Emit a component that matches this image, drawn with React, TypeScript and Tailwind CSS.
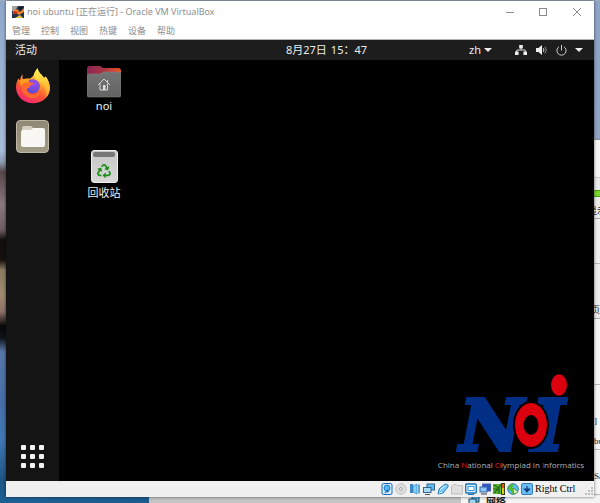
import type { ReactNode } from "react";
import { FaRecycle } from "react-icons/fa";

const uiFont = "font-['Noto_Sans','Noto_Sans_CJK_SC',sans-serif]";
const serifFont = "font-['Liberation_Serif','Noto_Sans_CJK_SC',serif]";

function Icon({ className, box = "0 0 12 12", children }: { className: string; box?: string; children: ReactNode }) {
  return (
    <svg className={"block shrink-0 " + className} viewBox={box} fill="none" aria-hidden="true">
      {children}
    </svg>
  );
}

function Wallpaper() {
  return (
    <div className="absolute inset-0 bg-gradient-to-r from-[#1d6196] to-[#17466f]">
      <div className="h-full w-2 bg-[linear-gradient(to_bottom,#8ea7ca_0px,#a9bdd9_150px,#8e9cb2_162px,#57464a_172px,#8a7a80_205px,#6d5c61_230px,#120e0e_240px,#16110f_260px,#8a7b61_270px,#a08b70_295px,#8d7067_312px,#080808_326px,#10151a_338px,#5877a8_352px,#466fa8_400px,#4178b4_440px,#1c5585_480px,#1c6092_503px)]" />
      <div className="absolute top-0 right-0 h-[140px] w-2 bg-gradient-to-b from-[#8fa6c6] to-[#91a5c3]" />
      <div className="absolute inset-x-0 top-0 h-px bg-[#a0aab9]" />
    </div>
  );
}

function BackWindow() {
  return (
    <div className={"absolute top-[139px] right-0 bottom-0 left-[149px] flex flex-col border-t border-[#8a8f96] bg-[#ececec] text-[9px] leading-3 text-[#222] " + serifFont}>
      <div className="ml-auto flex min-h-0 w-3 flex-1 flex-col overflow-hidden whitespace-nowrap">
        <div className="h-[38px] shrink-0 border-b border-[#ccc] bg-[#f6f6f6]" />
        <div className="h-3 shrink-0" />
        <div className="h-[7px] shrink-0 border-y border-[#4f9e1b] bg-[#7bd52c]" />
        <div className="h-[22px] shrink-0 border-b border-[#aaa] pt-2">显示</div>
        <div className="h-[45px] shrink-0 border-b border-[#bbb] bg-[#efefef]" />
        <div className="h-[55px] shrink-0 border-b border-[#aaa] pt-10 pl-[3px]">页</div>
        <div className="h-[66px] shrink-0 border-b border-[#bbb] bg-[#f6f6f6]" />
        <div className="h-[65px] shrink-0 border-b border-[#bbb] bg-[#f6f6f6] pt-[30px] pl-[6px]">
          <div>]</div>
          <div className="pt-2">bu</div>
        </div>
        <div className="h-[45px] shrink-0 border-b border-[#bbb] bg-[#f6f6f6] pt-5 pl-[6px]">Sa</div>
      </div>
      <div className="flex h-[7px] shrink-0">
        <div className="w-[312px] shrink-0 bg-[#c4c4c4]" />
        <div className="flex flex-1 items-start gap-[6px] overflow-hidden bg-[#f4f4f4] pl-[7px]">
          <Icon className="h-3 w-3">
            <rect x="4" y="0" width="7" height="6" fill="#5ab4ea" stroke="#246" />
            <rect x="1" y="3" width="7" height="6" fill="#9fd3f4" stroke="#246" />
          </Icon>
          <span className="text-[10px] leading-3 font-bold">网络</span>
        </div>
      </div>
    </div>
  );
}

function TitleBar() {
  return (
    <header className="flex h-[22px] shrink-0 items-center bg-white pl-[6px]">
      <Icon className="h-3 w-3">
        <rect width="12" height="12" fill="#26324a" />
        <path d="M0 0h6L3 5H0z" fill="#a6a39d" />
        <path d="M1 5l4-2 3 3 4-4v4L7 9 4 7 1 8z" fill="#f0822a" />
        <path d="M2 5l4 1-2 2-3-1z" fill="#d8261c" />
        <path d="M3 12l5-3 3 3z" fill="#e4bf4c" />
        <path d="M7 1l4 0-3 4z" fill="#101725" />
      </Icon>
      <h1 className={"ml-[3px] flex-1 text-[9px] leading-4 whitespace-nowrap text-[#909090] " + uiFont}>
        noi ubuntu [正在运行] - Oracle VM VirtualBox
      </h1>
      <div className="flex shrink-0 text-[#8a8a8a]">
        <button type="button" aria-label="最小化" className="flex h-5 w-[33px] items-center justify-center">
          <Icon className="h-2 w-2" box="0 0 8 8"><path d="M0 4.500h8" stroke="currentColor" /></Icon>
        </button>
        <button type="button" aria-label="最大化" className="flex h-5 w-[33px] items-center justify-center">
          <Icon className="h-2 w-2" box="0 0 8 8"><rect x=".5" y=".5" width="7" height="7" stroke="currentColor" /></Icon>
        </button>
        <button type="button" aria-label="关闭" className="flex h-5 w-[35px] items-center justify-center">
          <Icon className="h-2 w-2" box="0 0 8 8"><path d="M0 0l8 8M8 0L0 8" stroke="currentColor" /></Icon>
        </button>
      </div>
    </header>
  );
}

function MenuBar() {
  return (
    <nav className={"flex h-[17px] shrink-0 items-center gap-[11px] border-b border-[#b5b5b5] bg-white pl-[6px] text-[9px] leading-4 text-[#8c8c8c] " + uiFont}>
      {["管理", "控制", "视图", "热键", "设备", "帮助"].map((m) => (
        <button key={m} type="button">{m}</button>
      ))}
    </nav>
  );
}

function Caret() {
  return <Icon className="h-1 w-2" box="0 0 8 4"><path d="M0 0h8L4 4z" fill="#eee" /></Icon>;
}

function TopBar() {
  return (
    <div className={"flex h-5 shrink-0 items-center bg-[#1d1d1d] text-[11px] leading-4 text-[#ececec] " + uiFont}>
      <div className="w-[53px] shrink-0 pl-[9px]">
        <button type="button">活动</button>
      </div>
      <div className="grid flex-1 grid-cols-[1fr_auto_1fr] items-center">
        <button type="button" className="col-start-2 flex gap-1">
          <span>8月27日</span>
          <span>15：47</span>
        </button>
        <div className="flex items-center justify-self-end pr-[11px]">
          <button type="button" className="flex items-center gap-[3px]">zh <Caret /></button>
          <button type="button" aria-label="系统菜单" className="ml-[23px] flex items-center">
            <Icon className="h-[10px] w-3" box="0 0 12 10">
              <path d="M4.200 0h3.600v3.600H4.200zM0 6.400h3.600V10H0zM8.400 6.400H12V10H8.400z" fill="#eee" />
              <path d="M6 3v2M1.800 7V5h8.400v2" stroke="#ddd" />
            </Icon>
            <Icon className="ml-[9px] h-[10px] w-3" box="0 0 12 10">
              <path d="M0 3h2.500L6 0v10L2.500 7H0z" fill="#eee" />
              <path d="M7.300 3.200q1.300 1.800 0 3.600" stroke="#ddd" />
              <path d="M8.900 1.500q2.800 3.500 0 7" stroke="#888" />
            </Icon>
            <Icon className="ml-2 h-[11px] w-[11px]" box="0 0 11 11">
              <path d="M3 1.700a4.600 4.600 0 1 0 5 0M5.500 0v5.500" stroke="#ccc" />
            </Icon>
            <span className="ml-2"><Caret /></span>
          </button>
        </div>
      </div>
    </div>
  );
}

function Firefox() {
  return (
    <Icon className="h-9 w-[34px]" box="0 0 100 104">
      <defs>
        <linearGradient id="fox" x1=".8" y1="0" x2=".3" y2="1">
          <stop offset="0" stopColor="#fff05a" />
          <stop offset=".35" stopColor="#ffb42c" />
          <stop offset=".65" stopColor="#ff5634" />
          <stop offset="1" stopColor="#f22475" />
        </linearGradient>
        <radialGradient id="globe" cx=".6" cy=".3" r=".8">
          <stop offset="0" stopColor="#9b50ee" />
          <stop offset="1" stopColor="#5947c5" />
        </radialGradient>
        <linearGradient id="tail" x1=".5" y1="0" x2=".5" y2="1">
          <stop offset="0" stopColor="#fff44f" />
          <stop offset="1" stopColor="#ff9b2b" />
        </linearGradient>
      </defs>
      <path d="M20 17c-2 7-1 12 1 16 7-3 14-4 20-2l11-10C54 12 59 4 64 0c1 14 12 17 18 28 3-1 5-2 5-5 9 12 13 25 13 35 0 25-22 45-50 45S0 83 0 56c0-11 3-20 8-27 1 4 2 5 4 6 1-8 4-14 8-18z" fill="url(#fox)" />
      <path d="M52 21C55 12 59 4 64 0c1 14 12 17 18 28 3-1 5-2 5-5 15 21 17 47 1 63 5-23-5-42-23-49-5-2-10-8-13-16z" fill="url(#tail)" />
      <circle cx="49" cy="53" r="21" fill="url(#globe)" />
      <path d="M15 43c11-8 20-6 27-1 6-1 9 0 9 3-1 4-7 5-10 7 0 5-3 7-9 7-2 7 4 16 17 18 12 0 20-5 23-14 2 18-14 27-29 24C25 84 13 65 15 43z" fill="#ff6a2c" />
      <path d="M11 35c11-5 23-5 30-4-5 5-5 8-1 12-10-3-20 0-27 10z" fill="#ff9b20" />
    </Icon>
  );
}

function Dock() {
  return (
    <aside className="flex w-[53px] shrink-0 flex-col items-center bg-[#141414] pt-2 pb-[13px]">
      <button type="button" aria-label="Firefox"><Firefox /></button>
      <button type="button" aria-label="文件" className="mt-4 flex h-[33px] w-[33px] items-center justify-center rounded-[4px] border border-[#bdb7a5] bg-gradient-to-b from-[#8e8874] to-[#a29b86]">
        <Icon className="h-[22px] w-6" box="0 0 24 22">
          <path d="M1 2q0-2 2-2h7l2 2h9q2 0 2 2v6H1z" fill="#d5cfc2" />
          <path d="M0 6q0-2 2-2h8l2-2h10q2 0 2 2v15q0 2-2 2H2q-2 0-2-2z" fill="#f8f7f4" />
        </Icon>
      </button>
      <button type="button" aria-label="显示应用程序" className="mt-auto grid grid-cols-3 gap-1">
        {Array.from({ length: 9 }, (_, i) => (
          <span key={i} className="h-[5px] w-[5px] rounded-[1px] bg-[#f2f2f2]" />
        ))}
      </button>
    </aside>
  );
}

function DesktopIcons() {
  return (
    <div className={"flex w-[90px] shrink-0 flex-col items-center text-[11px] leading-4 text-[#f0f0f0] " + uiFont}>
      <button type="button" className="mt-[6px] flex h-[84px] flex-col items-center">
        <Icon className="h-8 w-[34px]" box="0 0 34 32">
          <defs>
            <linearGradient id="tab"><stop offset="0" stopColor="#8a2655" /><stop offset=".45" stopColor="#a93248" /><stop offset="1" stopColor="#ec5526" /></linearGradient>
            <linearGradient id="folder" x1="0" y1="0" x2="0" y2="1"><stop offset="0" stopColor="#747474" /><stop offset="1" stopColor="#636363" /></linearGradient>
          </defs>
          <path d="M0 3q0-3 3-3h10l3 2h15q3 0 3 3v10H0z" fill="url(#tab)" />
          <path d="M0 10q0-2 2-2h11l4-2h15q2 0 2 2v21q0 2-2 2H2q-2 0-2-2z" fill="url(#folder)" stroke="#858585" strokeWidth=".5" />
          <path d="M11 19l6-6 6 6M13 17.500V24h7.500v-6.500M20.500 14v2.500" stroke="#d4d4d4" />
          <path d="M16 19h2.500v5H16z" fill="#ddd" />
        </Icon>
        <span>noi</span>
      </button>
      <button type="button" className="flex flex-col items-center">
        <span className="flex h-[33px] w-[27px] flex-col items-center rounded-[3px] border border-[#eee] bg-gradient-to-b from-[#c6c6c6] to-[#d8d8d8] pt-px">
          <span className="h-[5px] w-[22px] rounded-[2px] bg-[#777]" />
          <FaRecycle className="mt-[7px] h-[14px] w-[14px] text-[#1c8f1a]" />
        </span>
        <span className="mt-[2px]">回收站</span>
      </button>
    </div>
  );
}

function NoiLogo() {
  return (
    <figure className="flex w-[148px] shrink-0 flex-col items-center self-end pb-[10px]">
      <svg className="block h-[80px] w-[128px]" viewBox="0 0 128 80" role="img" aria-label="NOI">
        <g fill="#002f85" stroke="#002f85" strokeWidth="4" fontFamily="'DejaVu Serif',serif" fontSize="69" fontWeight="bold" fontStyle="italic">
          <text x="13" y="76">N</text>
          <text x="85" y="76">I</text>
        </g>
        <ellipse cx="84" cy="51" rx="18" ry="24" fill="#000" />
        <ellipse cx="84" cy="51" rx="16" ry="22" fill="#dc000e" />
        <ellipse cx="84" cy="51" rx="7.500" ry="10" fill="#000" />
        <ellipse cx="112" cy="11" rx="8" ry="10.700" fill="#dc000e" />
      </svg>
      <figcaption className="mt-[5px] font-['Open_Sans',sans-serif] text-[8px] leading-3 whitespace-nowrap text-[#b0b0b0]">
        China <b className="font-normal text-[#e0141c]">N</b>ational <b className="font-normal text-[#e0141c]">O</b>lympiad in <b className="font-normal text-[#e0141c]">I</b>nformatics
      </figcaption>
    </figure>
  );
}

const statusIcons: { label: string; art: ReactNode }[] = [
  { label: "硬盘", art: <><rect x="1" y=".5" width="10" height="11" rx="1.500" fill="#d7edff" stroke="#1a66b8" /><circle cx="6" cy="5" r="3" fill="#55b9f5" stroke="#1a7ad0" /><path d="M3 10l4-4 1 3z" fill="#2170b8" /></> },
  { label: "光驱", art: <><circle cx="6" cy="6" r="5.300" fill="#dedede" stroke="#c2c2c2" /><circle cx="6" cy="6" r="1.500" fill="#f4f4f4" stroke="#aaa" /></> },
  { label: "音频", art: <><path d="M1 1h3v9H1z" fill="#3e87c2" /><path d="M4 3l4-2v10L4 9z" fill="#7ed0fa" stroke="#2f81bd" strokeWidth=".7" /><path d="M10 1.500v9" stroke="#5d9cc6" strokeWidth="1.800" /></> },
  { label: "网络", art: <><rect x="4" y="1" width="7.500" height="6" fill="#5dbcf1" stroke="#36648e" /><rect x=".5" y="4.500" width="7.500" height="5" fill="#a6dcfa" stroke="#36648e" /><path d="M2 11.500h5" stroke="#555" /></> },
  { label: "USB", art: <><path d="M1 11l1-5 6-5q4 0 3 3L6 10z" fill="#73c7f7" stroke="#337fb8" /><path d="M3 7l5-4M2 10l3-1" stroke="#e5f6ff" /></> },
  { label: "共享文件夹", art: <path d="M.5 3l2-1.500h3l1 1h5v8.500H.5z" fill="#dedede" stroke="#bebebe" /> },
  { label: "显示", art: <><rect x=".7" y="1" width="10.600" height="9" rx="1" fill="#d9f1ff" stroke="#1770b8" strokeWidth="1.300" /><rect x="3" y="3.500" width="6" height="4" fill="#fff" stroke="#319bdc" /><path d="M3 11.500h6" stroke="#1770b8" /></> },
  { label: "录像", art: <><rect x="3.500" y="1" width="8" height="7" fill="#2f55c8" stroke="#4a62b0" /><rect x="1" y="4" width="7" height="5" fill="#8bc6f5" stroke="#3565a5" /><path d="M2 11h6" stroke="#777" strokeWidth="1.500" /></> },
  { label: "处理器", art: <><rect y="1" width="12" height="10" fill="#5db535" /><path d="M1 2l5 3 2-4M1 10l5-5v6M0 6h6" stroke="#1d6410" strokeWidth="1.200" /><rect x="8.500" y=".5" width="3" height="11" fill="#d9c91e" stroke="#39400e" /><path d="M10 1v4" stroke="#ec4d20" strokeWidth="2" /></> },
  { label: "鼠标集成", art: <><circle cx="6" cy="6" r="5.300" fill="#5bc0ef" stroke="#257bb4" /><path d="M2 2l5-1-2 4 4 1 1 3-4 3-2-4-3-2z" fill="#55b928" /><path d="M6 5l5 4-4 2z" fill="#e9f9dc" stroke="#398519" strokeWidth=".6" /></> },
  { label: "键盘捕获", art: <><rect x=".5" y=".5" width="11" height="11" rx="1.500" fill="#6bbcf2" stroke="#2e7fba" /><path d="M6 3v4M3.500 6L6 8.800 8.500 6z" fill="#123e7c" stroke="#123e7c" strokeWidth="1.200" /></> },
];

function StatusBar() {
  return (
    <footer className="flex h-4 shrink-0 items-center justify-end gap-[2px] bg-[#f0f0f0]">
      {statusIcons.map(({ label, art }) => (
        <button key={label} type="button" aria-label={label}>
          <Icon className="h-3 w-3">{art}</Icon>
        </button>
      ))}
      <span className={"w-12 text-[10px] leading-4 whitespace-nowrap text-black " + serifFont}>Right Ctrl</span>
      <Icon className="mt-1 h-[10px] w-[9px]" box="0 0 9 10">
        <path d="M6 1h2v2H6zM3 4h2v2H3zM6 4h2v2H6zM0 7h2v2H0zM3 7h2v2H3zM6 7h2v2H6z" fill="#bdbdbd" />
      </Icon>
    </footer>
  );
}

export default function App() {
  return (
    <main className="relative h-screen w-full overflow-hidden">
      <Wallpaper />
      <BackWindow />
      <section className="absolute inset-x-[6px] top-px bottom-[6px] flex flex-col shadow-[0_0_3px_rgba(0,0,0,0.6)]">
        <TitleBar />
        <MenuBar />
        <TopBar />
        <div className="flex min-h-0 flex-1 bg-black">
          <Dock />
          <DesktopIcons />
          <div className="flex flex-1 justify-end pr-[9px]">
            <NoiLogo />
          </div>
        </div>
        <StatusBar />
      </section>
    </main>
  );
}
